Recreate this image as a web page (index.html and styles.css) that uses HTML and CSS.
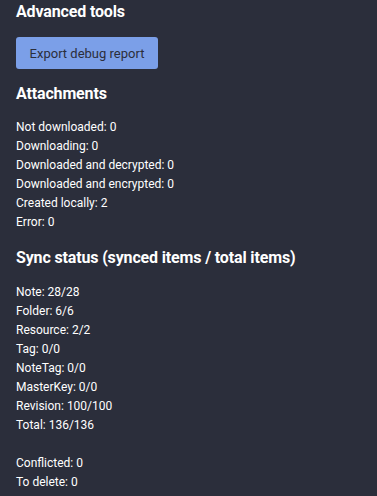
FILE: index.html
```html
<!DOCTYPE html>
<html lang="en">
<head>
    <meta charset="UTF-8">
    <meta name="viewport" content="width=device-width, initial-scale=1.0">
    <title>Status</title>
    <link rel="stylesheet" href="styles.css">
</head>
<body>
    <div class="container">
        <h2 class="first">Advanced tools</h2>
        <button type="button" class="debug-button">Export debug report</button>

        <h2>Attachments</h2>
        <div class="section">
            <div class="line">Not downloaded: 0</div>
            <div class="line">Downloading: 0</div>
            <div class="line">Downloaded and decrypted: 0</div>
            <div class="line">Downloaded and encrypted: 0</div>
            <div class="line">Created locally: 2</div>
            <div class="line">Error: 0</div>
        </div>

        <h2 class="sync">Sync status (synced items / total items)</h2>
        <div class="section">
            <div class="line">Note: 28/28</div>
            <div class="line">Folder: 6/6</div>
            <div class="line">Resource: 2/2</div>
            <div class="line">Tag: 0/0</div>
            <div class="line">NoteTag: 0/0</div>
            <div class="line">MasterKey: 0/0</div>
            <div class="line">Revision: 100/100</div>
            <div class="line">Total: 136/136</div>
            <div class="line empty"></div>
            <div class="line">Conflicted: 0</div>
            <div class="line">To delete: 0</div>
        </div>
    </div>
</body>
</html>
```

FILE: styles.css
```css
html, body {
    margin: 0;
    padding: 0;
    background-color: #2b2e3b;
}
body {
    font-family: Roboto, "Liberation Sans", sans-serif;
    color: #ffffff;
    overflow: hidden;
}
.container {
    padding: 0 16px;
}
h2 {
    font-size: 16px;
    font-weight: bold;
    line-height: 20px;
    letter-spacing: -0.15px;
    margin: 14.5px 0 14px;
}
h2.first {
    margin-top: 1.5px;
    margin-bottom: 15.5px;
}
h2.sync {
    margin-bottom: 15px;
}
.debug-button {
    display: block;
    height: 32px;
    width: 142px;
    padding: 0;
    font-family: Roboto, "Liberation Sans", sans-serif;
    font-size: 13px;
    color: #2b2e3b;
    background-color: #7b9fe8;
    border: none;
    border-radius: 3px;
}
.section {
    margin-bottom: 16px;
}
.line {
    font-size: 12px;
    line-height: 19px;
    height: 19px;
}
```
